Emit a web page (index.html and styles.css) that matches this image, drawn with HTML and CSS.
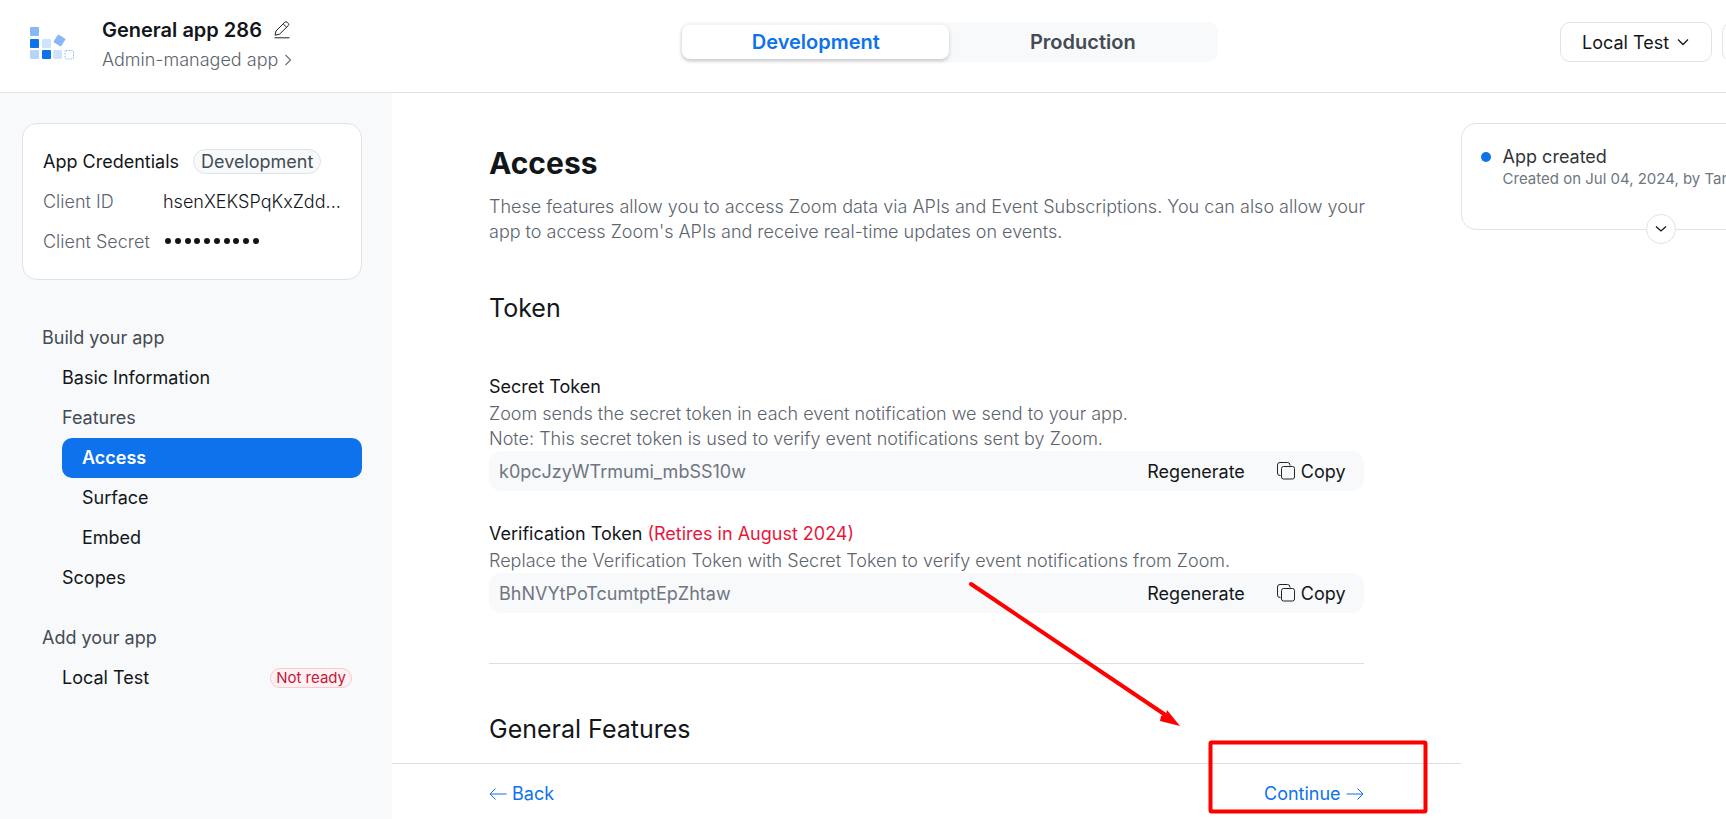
FILE: index.html
```
<!DOCTYPE html>
<html lang="en">
<head>
    <meta charset="UTF-8">
    <meta name="viewport" content="width=device-width, initial-scale=1.0">
    <title>General app 286 - Access</title>
    <link rel="stylesheet" href="styles.css">
</head>
<body>
<div class="app">

    <!-- Header -->
    <header class="header">
        <div class="app-info">
            <svg class="logo" width="46" height="34" viewBox="0 0 46 34" aria-hidden="true">
                <rect x="0" y="0" width="9" height="9" rx="1" fill="#86b8f7"/>
                <rect x="0" y="12" width="9" height="9" rx="1" fill="#0e72ed"/>
                <rect x="0" y="23" width="9" height="9" rx="1" fill="#b7d5fb"/>
                <rect x="12" y="12" width="9" height="9" rx="1" fill="#cfe3fc"/>
                <rect x="12" y="23" width="9" height="9" rx="1" fill="#0e72ed"/>
                <rect x="23" y="23" width="9" height="9" rx="1" fill="#cfe3fc"/>
                <rect x="25" y="9" width="9" height="9" rx="1" fill="#86b8f7" transform="rotate(32 29.5 13.5)"/>
                <rect x="35" y="23.5" width="8.5" height="8.5" rx="1" fill="none" stroke="#86b8f7" stroke-dasharray="1.5 1.2"/>
            </svg>
            <div class="app-title">
                <div class="name-row">
                    <strong>General app 286</strong>
                    <button class="icon-btn" aria-label="Edit app name">
                        <svg width="16" height="18" viewBox="0 0 16 18" fill="none" stroke="#222325">
                            <path d="M1 14.2 2 10 10.8 1.2Q12 .3 13.2 1.3L14.2 2.3Q15.3 3.5 14.2 4.7L5.5 13.2 1 14.2ZM9.2 2.9 12.6 6.2M.5 16.8H15.5"/>
                        </svg>
                    </button>
                </div>
                <a class="managed" href="#">Admin-managed app
                    <svg width="8" height="12" viewBox="0 0 8 12" fill="none" stroke="#6e7680" stroke-width="1.3"><path d="M1.5 1 6.5 6 1.5 11"/></svg>
                </a>
            </div>
        </div>
        <div class="env-switch">
            <button class="active">Development</button>
            <button>Production</button>
        </div>
        <div class="header-actions">
            <button class="outline-btn">Local Test
                <svg width="12" height="8" viewBox="0 0 12 8" fill="none" stroke="#131619" stroke-width="1.3"><path d="M1 1.5 6 6.5 11 1.5"/></svg>
            </button>
            <button class="outline-btn more-btn" aria-label="More"></button>
        </div>
    </header>

    <div class="body">
        <!-- Sidebar -->
        <aside class="sidebar">
            <section class="credentials">
                <div class="cred-row">App Credentials <span class="env-tag">Development</span></div>
                <div class="cred-row"><span class="cred-label">Client ID</span><span class="cred-value">hsenXEKSPqKxZdd...</span></div>
                <div class="cred-row"><span class="cred-label">Client Secret</span>
                    <svg width="96" height="8" viewBox="0 0 96 8" role="img" aria-label="Hidden" fill="#131619">
                        <circle cx="5" cy="4" r="3"/><circle cx="15" cy="4" r="3"/><circle cx="25" cy="4" r="3"/><circle cx="34" cy="4" r="3"/><circle cx="44" cy="4" r="3"/><circle cx="54" cy="4" r="3"/><circle cx="64" cy="4" r="3"/><circle cx="73" cy="4" r="3"/><circle cx="83" cy="4" r="3"/><circle cx="93" cy="4" r="3"/>
                    </svg>
                </div>
            </section>
            <nav class="nav">
                <div class="nav-heading">Build your app</div>
                <a href="#">Basic Information</a>
                <div class="nav-sub">Features</div>
                <div class="nav-group">
                    <a class="active" href="#">Access</a>
                    <a href="#">Surface</a>
                    <a href="#">Embed</a>
                </div>
                <a href="#">Scopes</a>
                <div class="nav-heading nav-gap">Add your app</div>
                <a href="#">Local Test <span class="status-tag">Not ready</span></a>
            </nav>
        </aside>

        <!-- Main content -->
        <main class="main">
            <div class="content">
                <h1>Access</h1>
                <p class="intro">These features allow you to access Zoom data via APIs and Event Subscriptions. You can also allow your app to access Zoom's APIs and receive real-time updates on events.</p>

                <h2>Token</h2>
                <div class="token">
                    <label for="secret">Secret Token</label>
                    <p>Zoom sends the secret token in each event notification we send to your app.<br>Note: This secret token is used to verify event notifications sent by Zoom.</p>
                    <div class="token-field">
                        <input type="text" id="secret" value="k0pcJzyWTrmumi_mbSS10w" readonly>
                        <button>Regenerate</button>
                        <button>
                            <svg width="18" height="18" viewBox="0 0 18 18" fill="none" stroke="#222325"><path d="M3.5 13.5H3Q.5 13.5 .5 11V3Q.5 .5 3 .5H10.5Q13 .5 13 3V3.5"/><rect x="4.5" y="4.5" width="13" height="12.5" rx="2"/></svg>
                            Copy
                        </button>
                    </div>
                </div>
                <div class="token">
                    <label for="verification">Verification Token <span class="retires">(Retires in August 2024)</span></label>
                    <p>Replace the Verification Token with Secret Token to verify event notifications from Zoom.</p>
                    <div class="token-field">
                        <input type="text" id="verification" value="BhNVYtPoTcumtptEpZhtaw" readonly>
                        <button>Regenerate</button>
                        <button>
                            <svg width="18" height="18" viewBox="0 0 18 18" fill="none" stroke="#222325"><path d="M3.5 13.5H3Q.5 13.5 .5 11V3Q.5 .5 3 .5H10.5Q13 .5 13 3V3.5"/><rect x="4.5" y="4.5" width="13" height="12.5" rx="2"/></svg>
                            Copy
                        </button>
                    </div>
                </div>
                <hr>
                <h2>General Features</h2>
            </div>
            <footer class="footer">
                <a href="#">
                    <svg width="18" height="12" viewBox="0 0 18 12" fill="none" stroke="#0e72ed"><path d="M6.5 .5 1 6 6.5 11.5M1 6H17.5"/></svg>
                    Back
                </a>
                <a href="#">Continue
                    <svg width="18" height="12" viewBox="0 0 18 12" fill="none" stroke="#0e72ed"><path d="M11.5 .5 17 6 11.5 11.5M17 6H.5"/></svg>
                </a>
            </footer>
            <!-- Pointer to the Continue link -->
            <svg class="callout" width="465" height="240" viewBox="0 0 465 240" aria-hidden="true">
                <path d="M7 7 200 137" stroke="#f00" stroke-width="4" stroke-linecap="round"/>
                <path d="M216 149 203 133 202 137 197 139 196 144Z" fill="#f00"/>
                <rect x="246.5" y="165.5" width="215" height="69" rx="1" fill="none" stroke="#f00" stroke-width="4"/>
            </svg>
        </main>

        <!-- App status -->
        <aside class="status">
            <div class="status-card">
                <span class="dot"></span>
                <div>
                    <div class="status-title">App created</div>
                    <div class="status-date">Created on Jul 04, 2024, by Tan</div>
                </div>
                <button class="expand-btn" aria-label="Expand">
                    <svg width="12" height="8" viewBox="0 0 12 8" fill="none" stroke="#131619" stroke-width="1.3"><path d="M1 1.5 6 6 11 1.5"/></svg>
                </button>
            </div>
        </aside>
    </div>

</div>
</body>
</html>
```
FILE: styles.css
```
/* General Styling */
:root {
    --blue: #0e72ed;
    --text: #131619;
    --text-mid: #444b53;
    --text-muted: #6e7680;
    --text-light: #5c646e;
    --border: #dfe3e8;
    --panel: #f7f9fb;
}

* {
    box-sizing: border-box;
}

body {
    margin: 0;
    overflow: hidden;
    font-family: Inter, "Liberation Sans", sans-serif;
    font-size: 18px;
    line-height: 25px;
    color: var(--text);
    background: white;
}

button, input {
    font: inherit;
    color: inherit;
    border: none;
    background: none;
    padding: 0;
}

button {
    cursor: pointer;
}

a {
    color: inherit;
    text-decoration: none;
}

h1, h2, p {
    margin: 0;
}

svg {
    flex: none;
}

/* The layout is wider than the window and runs off its right side */
.app {
    display: flex;
    flex-direction: column;
    width: 110%;
    height: 100vh;
}

/* Header */
.header {
    display: grid;
    grid-template-columns: 1fr 538px 1fr;
    align-items: center;
    padding: 15px 22px 20px;
    border-bottom: 1px solid var(--border);
}

.app-info {
    display: flex;
    align-items: center;
    gap: 26px;
    padding-left: 8px;
}

.app-title {
    display: flex;
    flex-direction: column;
    gap: 2px;
}

.name-row {
    display: flex;
    align-items: center;
    gap: 12px;
    font-size: 20px;
    line-height: 30px;
}

.name-row strong {
    font-weight: 600;
}

.icon-btn, .name-row svg {
    display: block;
}

.managed {
    display: flex;
    align-items: center;
    gap: 6px;
    font-weight: 300;
    color: var(--text-light);
}

.env-switch {
    display: flex;
    margin-bottom: 3px;
    padding: 3px 2px;
    border-radius: 10px;
    background: var(--panel);
}

.env-switch button {
    flex: 1;
    height: 34px;
    border-radius: 8px;
    font-size: 20px;
    font-weight: 600;
    color: var(--text-mid);
}

.env-switch .active {
    background: white;
    color: var(--blue);
    box-shadow: 0 2px 4px rgba(0, 0, 0, 0.2);
}

.header-actions {
    display: flex;
    justify-content: flex-end;
    gap: 10px;
    margin-bottom: 3px;
}

.outline-btn {
    display: flex;
    align-items: center;
    justify-content: center;
    gap: 8px;
    width: 152px;
    height: 40px;
    border: 1px solid var(--border);
    border-radius: 10px;
}

.more-btn {
    width: 155px;
}

.body {
    display: flex;
    flex: 1;
    min-height: 0;
}

/* Sidebar */
.sidebar {
    width: 392px;
    padding: 30px 30px 0 22px;
    background: var(--panel);
}

.credentials {
    padding: 17px 20px 18px;
    border: 1px solid var(--border);
    border-radius: 15px;
    background: white;
}

.cred-row {
    display: flex;
    align-items: center;
    height: 40px;
}

.cred-label {
    flex: none;
    width: 120px;
    font-weight: 300;
    color: var(--text-light);
}

.cred-value {
    font-weight: 300;
}

.env-tag {
    margin-left: 14px;
    padding: 0 7px;
    border: 1px solid var(--border);
    border-radius: 13px;
    line-height: 23px;
    color: var(--text-mid);
    background: var(--panel);
}

.nav {
    padding: 38px 0 0 40px;
    line-height: 40px;
}

.nav a {
    display: flex;
    align-items: center;
    justify-content: space-between;
    padding-right: 10px;
}

.nav-heading {
    margin-left: -20px;
    color: var(--text-mid);
}

.nav-sub {
    color: var(--text-mid);
}

.nav-gap {
    margin-top: 20px;
}

.nav .nav-group a {
    padding-left: 20px;
    border-radius: 10px;
}

.nav-group .active {
    background: var(--blue);
    color: white;
    font-weight: 600;
}

.status-tag {
    padding: 0 5px;
    border: 1px solid #fcc9d0;
    border-radius: 10px;
    font-size: 15px;
    line-height: 18px;
    color: #c4183c;
    background: #fff0f2;
}

/* Main */
.main {
    position: relative;
    display: flex;
    flex: 1;
    flex-direction: column;
    min-width: 0;
}

.content {
    flex: 1;
    min-height: 0;
    overflow: hidden;
    padding: 50px 97px 0;
}

.content p {
    font-weight: 300;
    color: var(--text-light);
}

.content .intro {
    margin-right: -10px;
}

h1 {
    margin-bottom: 11px;
    font-size: 30px;
    font-weight: 700;
    line-height: 40px;
}

h2 {
    font-size: 25px;
    font-weight: 400;
    line-height: 35px;
}

.content p + h2 {
    margin: 47px 0 48px;
}

.token {
    margin-bottom: 30px;
}

.token label {
    display: block;
    margin-bottom: 2px;
}

.retires {
    color: #e8173d;
}

.token-field {
    display: flex;
    align-items: center;
    height: 40px;
    padding: 0 18px 0 10px;
    border-radius: 12px;
    background: var(--panel);
}

.token-field input {
    flex: 1;
    min-width: 0;
    color: var(--text-muted);
}

.token-field button {
    display: flex;
    align-items: center;
    gap: 6px;
    margin-left: 32px;
}

hr {
    margin: 50px 0 48px;
    border: none;
    border-top: 1px solid #dedfe1;
}

/* Footer */
.footer {
    display: flex;
    justify-content: space-between;
    padding: 17px 97px 13px;
    border-top: 1px solid #dedfe1;
    color: var(--blue);
}

.footer a {
    display: flex;
    align-items: center;
    gap: 5px;
}

.callout {
    position: absolute;
    right: 32px;
    bottom: 2px;
    pointer-events: none;
}

/* Status */
.status {
    width: 438px;
    padding: 30px 38px 0 0;
}

.status-card {
    position: relative;
    display: flex;
    gap: 12px;
    padding: 20px 19px 40px;
    border: 1px solid var(--border);
    border-radius: 15px;
}

.dot {
    width: 10px;
    height: 10px;
    margin-top: 8px;
    border-radius: 50%;
    background: var(--blue);
}

.status-title {
    color: #333639;
}

.status-date {
    font-size: 15px;
    line-height: 20px;
    color: var(--text-muted);
}

.expand-btn {
    position: absolute;
    bottom: -15px;
    left: 50%;
    display: flex;
    align-items: center;
    justify-content: center;
    width: 30px;
    height: 30px;
    margin-left: -15px;
    border: 1px solid var(--border);
    border-radius: 50%;
    background: white;
}
```
